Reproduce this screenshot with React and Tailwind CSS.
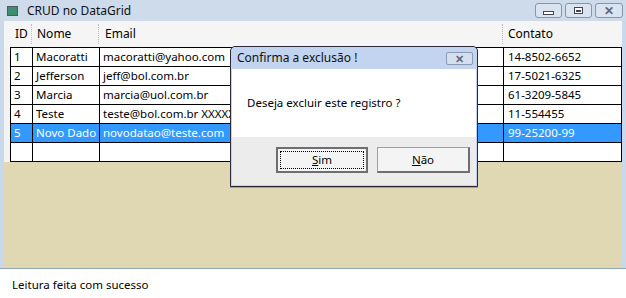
import React from "react";

const rows = [
  { id: "1", nome: "Macoratti", email: "macoratti@yahoo.com", contato: "14-8502-6652" },
  { id: "2", nome: "Jefferson", email: "jeff@bol.com.br", contato: "17-5021-6325" },
  { id: "3", nome: "Marcia", email: "marcia@uol.com.br", contato: "61-3209-5845" },
  { id: "4", nome: "Teste", email: "teste@bol.com.br XXXXXXXXX", contato: "11-554455" },
  { id: "5", nome: "Novo Dado", email: "novodatao@teste.com", contato: "99-25200-99", selected: true },
  { id: "", nome: "", email: "", contato: "" },
];

function WinButton({ children, w = "w-[27px]" }) {
  return (
    <div className={`${w} h-[15px] border border-[#8596ab] rounded-[3px] bg-[#d9e4f0] flex items-center justify-center`}>
      {children}
    </div>
  );
}

function Cell({ children, className = "" }) {
  return (
    <div className={`h-[19px] border-r border-b border-black flex items-center px-[3px] overflow-hidden whitespace-nowrap ${className}`}>
      {children}
    </div>
  );
}

export default function App() {
  return (
    <div
      className="w-[626px] h-[298px] relative flex flex-col bg-[#c9d8ea] text-[11.5px] text-black overflow-hidden"
      style={{ fontFamily: '"Noto Sans", "Open Sans", sans-serif' }}
    >
      {/* Title bar */}
      <div className="h-[21px] flex items-center pl-[7px] pr-[3px] bg-[#cddbeb]">
        <div className="w-[11px] h-[10px] border border-[#556] bg-[#3f8f6f] mr-[9px]" />
        <span className="text-[12px] text-[#111] leading-none">CRUD no DataGrid</span>
        <div className="ml-auto flex gap-[3px] items-center">
          <WinButton>
            <div className="w-[11px] h-[4px] border border-[#445] bg-white mt-[4px]" />
          </WinButton>
          <WinButton>
            <div className="w-[9px] h-[7px] border border-[#445] bg-white flex items-center justify-center">
              <div className="w-[5px] h-[2px] bg-[#445]" />
            </div>
          </WinButton>
          <WinButton w="w-[28px]">
            <span className="text-[12px] font-bold text-[#667] leading-none">✕</span>
          </WinButton>
        </div>
      </div>

      {/* Client area */}
      <div className="flex-1 flex flex-col mx-[4px] bg-[#f3f3f3]">
        {/* Header */}
        <div className="h-[26px] pl-[6px] grid grid-cols-[22px_67px_404px_122px] items-end pb-[3px] bg-[#f5f5f5] text-[12px]">
          <div className="pl-[5px] border-r border-dotted border-[#bbb] h-[20px] flex items-center">ID</div>
          <div className="pl-[5px] border-r border-dotted border-[#bbb] h-[20px] flex items-center">Nome</div>
          <div className="pl-[6px] border-r border-dotted border-[#bbb] h-[20px] flex items-center">Email</div>
          <div className="pl-[5px] h-[20px] flex items-center">Contato</div>
        </div>
        {/* Rows */}
        <div className="ml-[6px] grid grid-cols-[22px_67px_404px_118px] border-t border-l border-black bg-white">
          {rows.map((r, i) => {
            const sel = r.selected ? "bg-[#3399ff] text-white" : "";
            return (
              <React.Fragment key={i}>
                <Cell className={sel}>{r.id}</Cell>
                <Cell className={sel}>{r.nome}</Cell>
                <Cell className={sel}>{r.email}</Cell>
                <Cell className={`${sel} pl-[4px]`}>{r.contato}</Cell>
              </React.Fragment>
            );
          })}
        </div>
        <div className="flex-1 bg-[#e0d8b2]" />
      </div>

      {/* Status bar */}
      <div className="h-[30px] bg-white border-t border-[#8ea5c0] flex items-center pl-[12px] pt-[2px]">
        Leitura feita com sucesso
      </div>

      {/* Dialog */}
      <div className="absolute left-[230px] top-[46px] w-[248px] h-[141px] border border-[#2a2a3a] rounded-t-[5px] flex flex-col bg-[#bfd2ef] shadow-[0_1px_0_#4ab8e0]">
        <div className="h-[22px] flex items-center pl-[6px] pr-[4px] bg-[#c2d4f0] rounded-t-[5px] text-[12px]">
          <span className="text-[#111]">Confirma a exclusão !</span>
          <div className="ml-auto w-[27px] h-[13px] border border-[#8a9ab0] rounded-[2px] bg-[#d4e0f0] flex items-center justify-center">
            <span className="text-[11px] font-bold text-[#667] leading-none">✕</span>
          </div>
        </div>
        <div className="h-[68px] bg-white flex items-center pl-[15px] mx-[1px]">
          Deseja excluir este registro ?
        </div>
        <div className="flex-1 bg-[#ececec] mx-[1px] mb-[1px] flex items-start pt-[10px] pl-[44px] gap-[9px]">
          <button className="w-[92px] h-[26px] border-2 border-[#6e6e6e] bg-[#f4f4f4] p-[2px]">
            <div className="w-full h-full border border-dotted border-black flex items-center justify-center">
              <span><span className="underline">S</span>im</span>
            </div>
          </button>
          <button className="w-[93px] h-[26px] border border-[#a0a0a0] border-b-[#6e6e6e] border-r-[#6e6e6e] border-b-2 border-r-2 bg-[#f4f4f4] flex items-center justify-center">
            <span><span className="underline">N</span>ão</span>
          </button>
        </div>
      </div>
    </div>
  );
}
